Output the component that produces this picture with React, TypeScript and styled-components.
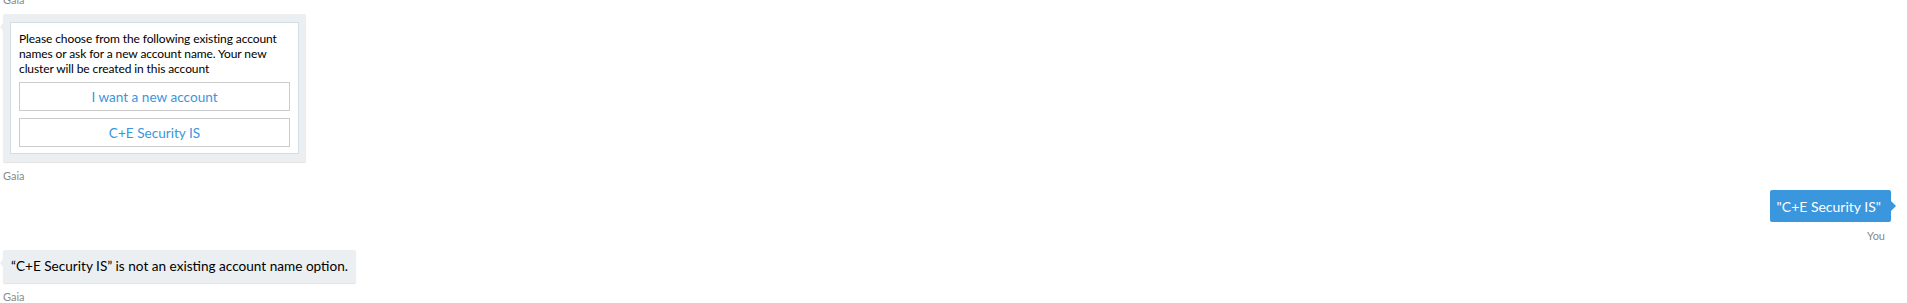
import React from "react";
import styled, { createGlobalStyle, css } from "styled-components";

const GlobalStyle = createGlobalStyle`
  body {
    margin: 0;
    background: #ffffff;
    font-family: Lato, "Open Sans", sans-serif;
    color: #000000;
  }
`;

const Transcript = styled.div`
  display: flex;
  flex-direction: column;
  margin-top: -8px;
  padding: 0 16px 0 3px;
`;

const MessageGroup = styled.div<{ fromMe?: boolean }>`
  display: flex;
  flex-direction: column;
  align-items: ${({ fromMe }) => (fromMe ? "flex-end" : "flex-start")};
  margin-bottom: 7px;
`;

const From = styled.div<{ fromMe?: boolean; first?: boolean }>`
  font-size: 11px;
  line-height: 15px;
  color: #8a8a8a;
  margin-top: ${({ first }) => (first ? "0" : "6px")};
  ${({ fromMe }) =>
    fromMe &&
    css`
      margin-right: 6px;
    `}
`;

const Bubble = styled.div<{ fromMe?: boolean }>`
  position: relative;
  box-sizing: border-box;
  line-height: 17px;
  border-radius: 2px;

  ${({ fromMe }) =>
    fromMe
      ? css`
          background: #3a96dd;
          color: #ffffff;
          font-size: 14px;
          padding: 8px 10px 7px 7px;

          &::after {
            content: "";
            position: absolute;
            right: -5px;
            top: 11px;
            border-left: 5px solid #3a96dd;
            border-top: 5px solid transparent;
            border-bottom: 5px solid transparent;
          }
        `
      : css`
          background: #eceff1;
          font-size: 13.6px;
          padding: 8px;
          box-shadow: 0 1px 1px rgba(0, 0, 0, 0.12);

          &::before {
            content: "";
            position: absolute;
            left: -3px;
            top: 9px;
            border-right: 3px solid #eceff1;
            border-top: 4px solid transparent;
            border-bottom: 4px solid transparent;
          }
        `}
`;

const CardBubble = styled(Bubble)`
  width: 303px;
  padding: 8px 7px;
`;

const Card = styled.div`
  display: flex;
  flex-direction: column;
  background: #ffffff;
  border: 1px solid #d2dde6;
  padding: 8px 8px 6px;
`;

const CardText = styled.p`
  margin: 0 0 6px;
  font-size: 12px;
  line-height: 15px;
  letter-spacing: -0.1px;
`;

const Actions = styled.div`
  display: flex;
  flex-direction: column;
  gap: 7px;
`;

const ActionButton = styled.button`
  box-sizing: border-box;
  width: 100%;
  height: 29px;
  background: transparent;
  border: 1px solid #cccccc;
  color: #3a96dd;
  font-family: inherit;
  font-size: 13.6px;
  cursor: pointer;
  padding: 0 8px;
`;

const choices = ["I want a new account", "C+E Security IS"];

export default function App() {
  return (
    <>
      <GlobalStyle />
      <Transcript>
        <MessageGroup>
          <From first>Gaia</From>
        </MessageGroup>

        <MessageGroup>
          <CardBubble>
            <Card>
              <CardText>
                Please choose from the following existing account names or ask
                for a new account name. Your new cluster will be created in
                this account
              </CardText>
              <Actions>
                {choices.map((c) => (
                  <ActionButton key={c}>{c}</ActionButton>
                ))}
              </Actions>
            </Card>
          </CardBubble>
          <From>Gaia</From>
        </MessageGroup>

        <MessageGroup fromMe>
          <Bubble fromMe>"C+E Security IS"</Bubble>
          <From fromMe>You</From>
        </MessageGroup>

        <MessageGroup>
          <Bubble>
            “C+E Security IS” is not an existing account name option.
          </Bubble>
          <From>Gaia</From>
        </MessageGroup>
      </Transcript>
    </>
  );
}
